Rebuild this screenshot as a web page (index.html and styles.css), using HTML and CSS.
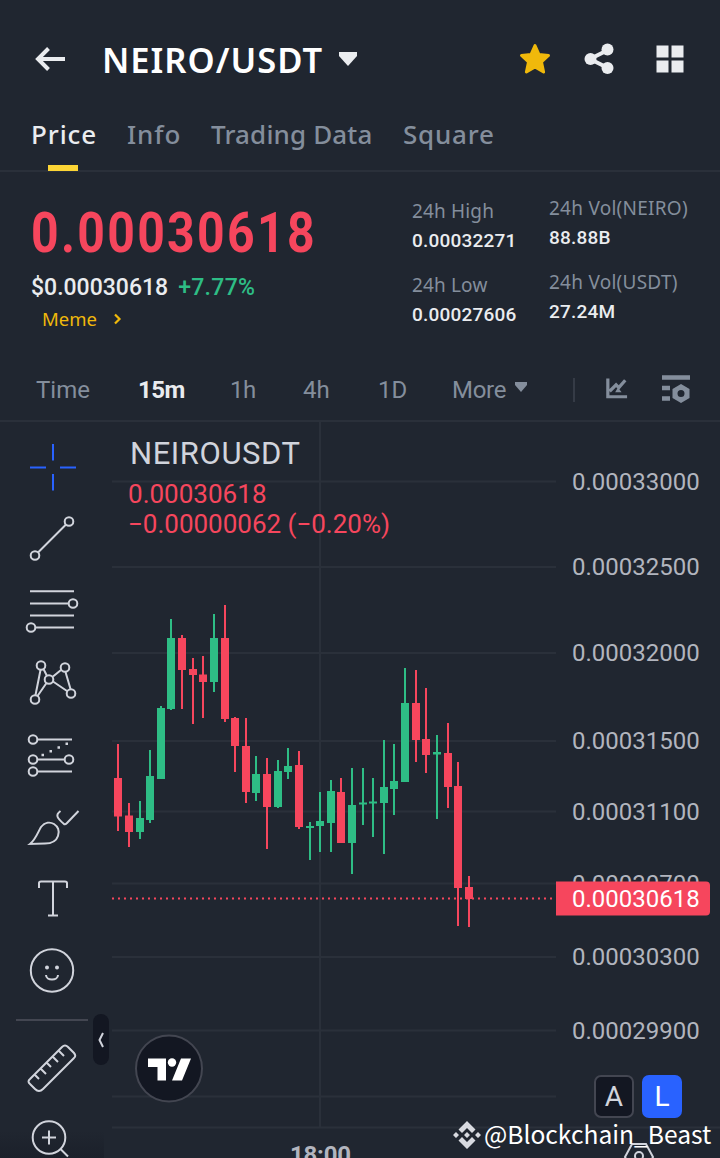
FILE: index.html
```html
<!DOCTYPE html>
<html lang="en">
<head>
<meta charset="utf-8">
<title>NEIRO/USDT</title>
<link rel="stylesheet" href="styles.css">
</head>
<body>
<div class="app">
  <header class="header">
    <svg class="back" viewBox="0 0 32 28"><path d="M31 14H4M14.500 3.500L4 14L14.500 24.500" fill="none" stroke="#eaecef" stroke-width="4"/></svg>
    <h1 class="title">NEIRO/USDT</h1>
    <svg class="caret" viewBox="0 0 20 16"><path d="M1 1H19V5L10 15L1 5Z" fill="#eaecef"/></svg>
    <div class="actions">
      <svg class="star" viewBox="0 0 32 32"><path d="M16 2.5L20 11.5L29.5 12.5L22.5 19L24.6 29L16 24L7.4 29L9.5 19L2.5 12.5L12 11.5Z" fill="#f0b90b" stroke="#f0b90b" stroke-width="3" stroke-linejoin="round"/></svg>
      <svg class="share" viewBox="0 0 30 32"><path d="M24 7L6 16L24 25" fill="none" stroke="#eaecef" stroke-width="4"/><g fill="#eaecef"><circle cx="23.5" cy="6.5" r="6"/><circle cx="6.5" cy="16" r="6"/><circle cx="23.5" cy="25" r="6"/></g></svg>
      <svg class="tiles" viewBox="0 0 28 28"><path d="M0.5 0.5H12.5V12.5H.5ZM15.5 .5H27.5V12.5H15.5ZM.5 15.5H12.5V27.5H.5ZM15.5 15.5H27.5V27.5H15.5Z" fill="#eaecef"/></svg>
    </div>
  </header>
  <nav class="tabs">
    <span class="tab tab-active">Price</span>
    <span class="tab tab-info">Info</span>
    <span class="tab tab-data">Trading Data</span>
    <span class="tab tab-square">Square</span>
  </nav>
  <section class="summary">
    <div class="quote">
      <div class="last">0.00030618</div>
      <div class="fiat"><span class="fiat-value">$0.00030618</span><span class="change">+7.77%</span></div>
      <div class="tag">Meme<svg class="chevron" viewBox="0 0 9 12"><path d="M2 1.5L6.5 6L2 10.5" fill="none" stroke="#f0b90b" stroke-width="2.2"/></svg></div>
    </div>
    <div class="stats">
      <div class="stat"><span class="label">24h High</span><span class="value">0.00032271</span></div>
      <div class="stat"><span class="label">24h Low</span><span class="value">0.00027606</span></div>
    </div>
    <div class="stats stats-volume">
      <div class="stat"><span class="label">24h Vol(NEIRO)</span><span class="value">88.88B</span></div>
      <div class="stat"><span class="label">24h Vol(USDT)</span><span class="value">27.24M</span></div>
    </div>
  </section>
  <nav class="intervals">
    <span class="interval time">Time</span>
    <span class="interval interval-active">15m</span>
    <span class="interval hour">1h</span>
    <span class="interval four">4h</span>
    <span class="interval day">1D</span>
    <span class="interval more">More</span>
    <svg class="more-caret" viewBox="0 0 14 11"><path d="M1 0H13V3L7 10L1 3Z" fill="#848e9c"/></svg>
    <span class="separator"></span>
    <svg class="depth" viewBox="0 0 24 24"><path d="M2 1V21H23M4 15L11 8L14 11L21 3" fill="none" stroke="#848e9c" stroke-width="3.5"/><path d="M13 11L17 16H10Z" fill="#848e9c"/></svg>
    <svg class="settings" viewBox="0 0 28 30"><path d="M0 3.5H28M0 14H8M0 24.5H8" stroke="#848e9c" stroke-width="4.5"/><path fill-rule="evenodd" d="M19 10L27.5 15V24L19 29L10.5 24V15ZM19 16A3.5 3.5 0 1 0 19 23A3.5 3.5 0 1 0 19 16Z" fill="#848e9c"/></svg>
  </nav>
  <main class="workspace">
    <aside class="tools">
      <svg class="tool" viewBox="0 431 112 72"><path d="M53 444V460.500M53 474V490.500M30 467.500H46M60 467.500H76" stroke="#2962ff" stroke-width="2"/></svg>
      <svg class="tool" viewBox="0 503 112 72"><circle cx="69" cy="521.500" r="4.300"/><circle cx="35" cy="555.500" r="4.300"/><path d="M38 552.500L66 524.500"/></svg>
      <svg class="tool" viewBox="0 575 112 72"><path d="M30 591.300H74M30 603.500H68.500M30 615.500H74M35 627.500H74"/><circle cx="73" cy="603.500" r="4.300"/><circle cx="31" cy="627.500" r="4.300"/></svg>
      <svg class="tool" viewBox="0 647 112 72"><circle cx="41" cy="665.500" r="4.300"/><circle cx="65" cy="667.500" r="4.300"/><circle cx="49" cy="679.500" r="4.300"/><circle cx="35" cy="699.500" r="4.300"/><circle cx="71" cy="693.500" r="4.300"/><path d="M40.500 670L35.500 695M43.500 669L47 676M61 670L53 676.500M46.500 683L37.500 696M53 681.500L67 691M65.500 672L70.500 689"/></svg>
      <svg class="tool" viewBox="0 719 112 72"><circle cx="33" cy="739.500" r="4.300"/><circle cx="33" cy="759.500" r="4.300"/><circle cx="69" cy="759.500" r="4.300"/><circle cx="33" cy="771.500" r="4.300"/><path d="M37.500 739.500H72M37.500 759.500H64.500M37.500 771.500H72"/><path d="M41.500 755h2.500M49.500 751.300h2.500M57.500 747.500h2.500M65.500 743.700h2.500" stroke-width="2.500"/></svg>
      <svg class="tool" viewBox="0 791 112 72"><path d="M30 844C36 839 38 832 41 827C49 817 62 826 58 836C56 842 50 843.500 45 843.500ZM60.500 811C55 815 57 818 64 824Q65 825 67 823L78.500 811"/></svg>
      <svg class="tool" viewBox="0 863 112 72"><path d="M39 888V883Q39 881.500 41 881.500H65Q67 881.500 67 883V888M53 882V915.500M48 915.500H58"/></svg>
      <svg class="tool" viewBox="0 935 112 72"><circle cx="52" cy="970.500" r="21.200"/><path d="M46 975C46 981 58 981 58 975"/><circle class="dot" cx="47" cy="967.500" r="2"/><circle class="dot" cx="57" cy="967.500" r="2"/></svg>
      <div class="tool-divider"></div>
      <svg class="tool" viewBox="0 1032 112 72"><path d="M30 1079L62 1047Q65 1044 68 1047L74 1053Q76.500 1056 74 1058L43 1089Q39 1093 35 1089L30 1084Q27 1081.500 30 1079ZM35 1075L39 1079M41 1069L46 1074M47 1063L51 1067M53 1057L58 1062M59 1051L64 1056"/></svg>
      <svg class="tool tool-zoom" viewBox="0 1104 112 54"><circle cx="49" cy="1137.500" r="16.300"/><path d="M42 1137.500H56M49 1130.500V1144.500M60.500 1149L68 1156.500"/></svg>
    </aside>
    <svg class="chart" viewBox="112 420 608 738">
      <path class="grid" d="M112 481.500H556M112 567H556M112 653H556M112 741H556M112 811.500H556M112 883.500H556M112 957H556M112 1030.500H556M112 1096.500H556M112 1127.500H720M320 420V1127"/>
      <path class="wick up" d="M140 801V839M150 750V823M161 706V779M171 619V710M214 614V692M256 756V801M278 760V808M288 748V779M310 822V860M320 792V852M331 780V852M352 768V874M363 768V825M373 778V837M384 740V854M394 744V815M405 668V782M437 735V819"/>
      <path class="body up" d="M140 818V832M150 776V820M161 708V779M171 638V709M214 638V682M256 774V793M278 771V807M288 766V772M310 826V828M320 821V826M331 791V823M352 805V843M363 802.500V804.500M373 801.500V803.500M384 787V803M394 781V789M405 703V782M437 752V754.500"/>
      <path class="wick down" d="M118 744V831M129 803V847M182 635V709M193 658V724M203 656V718M225 605V722M235 717V772M246 718V803M267 758V849M299 751V829M341 778V843M416 670V762M426 688V773M448 723V808M458 762V926M469 876V927"/>
      <path class="body down" d="M118 778V816.500M129 815.500V832M182 638V670M193 669V675M203 674.500V682M225 638V719M235 718V746M246 746V792M267 774V807M299 765V827M341 792V843M416 703V740M426 739V755M448 753V787M458 786V888M469 887V899"/>
      <path class="price-line" d="M112 898.500H555"/>
      <text class="symbol" x="130" y="463.500" textLength="170">NEIROUSDT</text>
      <g class="legend"><text x="128" y="503" textLength="138.500">0.00030618</text><text x="128" y="533" textLength="262">−0.00000062 (−0.20%)</text></g>
      <g class="axis">
        <text x="572" y="490">0.00033000</text><text x="572" y="575">0.00032500</text><text x="572" y="661">0.00032000</text><text x="572" y="749">0.00031500</text><text x="572" y="820">0.00031100</text><text x="572" y="892">0.00030700</text><text x="572" y="965">0.00030300</text><text x="572" y="1039">0.00029900</text>
      </g>
      <path d="M556 881.500H706Q710 881.500 710 885.500V911.500Q710 915.500 706 915.500H556Z" fill="#f6465d"/>
      <text class="current" x="572" y="907">0.00030618</text>
      <text class="clock" x="290" y="1163" textLength="61">18:00</text>
      <circle cx="169" cy="1068.500" r="33" fill="#131722" stroke="#434651" stroke-width="2"/>
      <path d="M148 1058.500H166V1080.500H157.500V1067H148ZM181 1058.500H191L182 1080.500H172Z" fill="#fff"/><circle cx="172" cy="1062.500" r="4.200" fill="#fff"/>
      <path class="gear" d="M632 1144H646L653 1157L646 1170H632L625 1157Z"/><circle class="gear" cx="639" cy="1156" r="4"/>
    </svg>
    <div class="collapse"><svg viewBox="0 0 6 16"><path d="M5 1L1.500 8L5 15" fill="none" stroke="#d1d4dc" stroke-width="2"/></svg></div>
    <div class="scales"><span class="scale">A</span><span class="scale scale-on">L</span></div>
    <div class="credit">
      <svg viewBox="0 0 28 28"><path d="M14 0L22.500 8.500L19 12L14 7L9 12L5.500 8.500ZM3 11L6 14L3 17L0 14ZM25 11L28 14L25 17L22 14ZM14 11L17 14L14 17L11 14ZM9 16L14 21L19 16L22.500 19.500L14 28L5.500 19.500Z" fill="#d8dae0"/></svg>
      <span class="handle">@Blockchain_Beast</span>
    </div>
  </main>
</div>
</body>
</html>
```

FILE: styles.css
```css
* { box-sizing: border-box; }
body { margin: 0; background: #202630; }
svg { display: block; flex: none; }
.app { width: 720px; height: 1158px; overflow: hidden; background: #202630; color: #eaecef; font-family: "Noto Sans", sans-serif; white-space: nowrap; }
.header { display: flex; align-items: center; height: 118px; padding: 0 0 1px 34px; }
.back { width: 32px; height: 28px; }
.title { width: 220px; margin: 3px 0 0 36px; font-size: 34.5px; line-height: 44px; font-weight: 600; color: #fff; letter-spacing: 1px; }
.caret { width: 20px; height: 16px; margin-left: 16px; }
.actions { display: flex; align-items: center; margin-left: 161px; }
.star { width: 32px; height: 32px; }
.share { width: 30px; height: 32px; margin-left: 33px; }
.tiles { width: 28px; height: 28px; margin-left: 42px; }

.tabs { display: flex; height: 54px; padding-left: 31px; border-bottom: 2px solid #2a303a; font-size: 26px; line-height: 32px; font-weight: 500; color: #848e9c; }
.tab { flex: none; }
.tab-active { display: flex; flex-direction: column; justify-content: space-between; width: 65px; color: #eaecef; letter-spacing: 0.9px; }
.tab-active::after { content: ""; width: 30px; height: 6px; margin: 0 0 -1px 17px; background: #fcd535; }
.tab-info { margin-left: 31px; width: 54px; letter-spacing: 0.9px; }
.tab-data { margin-left: 30px; width: 161px; letter-spacing: 0.15px; }
.tab-square { margin-left: 31px; letter-spacing: 0.8px; }

.summary { display: flex; height: 187px; }
.quote { width: 412px; padding: 31px 0 0 31px; }
.last { width: 330px; font: 700 56px/60px Roboto, sans-serif; color: #f6465d; letter-spacing: 2.7px; transform: scaleX(0.86); transform-origin: left; }
.fiat { display: flex; gap: 10px; margin-top: 11px; font: 500 23px/28px Roboto, sans-serif; }
.change { color: #2ebd85; letter-spacing: 0.3px; }
.tag { display: flex; align-items: center; gap: 16px; margin: 3px 0 0 11px; font-size: 18.5px; line-height: 28px; color: #f0b90b; }
.chevron { width: 9px; height: 12px; }
.stats { display: flex; flex-direction: column; gap: 18px; width: 137px; padding-top: 26px; }
.stats-volume { width: 171px; padding-top: 23px; }
.stat { display: flex; flex-direction: column; height: 56px; }
.label { font-size: 19px; line-height: 27px; color: #848e9c; letter-spacing: 0.15px; }
.stats-volume .label { letter-spacing: 0.25px; }
.value { font: 500 19px/31px Roboto, sans-serif; letter-spacing: 0.2px; }

.intervals { display: flex; align-items: center; height: 63px; padding-left: 36px; border-bottom: 2px solid #2a303a; font: 400 24px/30px Roboto, sans-serif; color: #848e9c; }
.interval { flex: none; }
.time { width: 102px; }
.interval-active { width: 92px; color: #eaecef; font-weight: 700; letter-spacing: -0.5px; }
.hour { width: 73px; letter-spacing: -0.4px; }
.four { width: 75px; }
.day { width: 74px; }
.more { width: 61px; letter-spacing: -0.3px; }
.more-caret { width: 14px; height: 11px; margin: -4px 0 0 1px; }
.separator { width: 2px; height: 24px; margin: 0 31px 0 45px; background: #353b46; }
.depth { width: 22px; height: 23px; margin-bottom: 2px; }
.settings { width: 28px; height: 30px; margin: 0 0 2px 34px; }

.workspace { position: relative; display: flex; height: 738px; margin-top: -2px; }
.tools { display: flex; flex-direction: column; width: 112px; padding-top: 11px; }
.tool { width: 112px; height: 72px; fill: none; stroke: #d1d4dc; stroke-width: 2; }
.dot { fill: #d1d4dc; stroke: none; }
.tool-divider { width: 72px; height: 2px; margin: 12px 0 11px 16px; background: #434651; }
.tool-zoom { height: 54px; background: linear-gradient(transparent 50%, #1b202a) 0 0 / 104px 54px no-repeat; }
.chart { width: 608px; height: 738px; font-family: Roboto, sans-serif; }
.grid { fill: none; stroke: #2a303a; stroke-width: 2; }
.wick { fill: none; stroke-width: 2; }
.body { fill: none; stroke-width: 8; }
.up { stroke: #2ebd85; }
.down { stroke: #f6465d; }
.price-line { stroke: #f6465d; stroke-width: 2; stroke-dasharray: 2 4; }
.symbol { font-size: 31px; fill: #d1d4dc; }
.legend { font-size: 26px; fill: #f6465d; }
.axis { font-size: 24px; fill: #b2b5be; }
.current { font-size: 24px; fill: #fff; }
.clock { font-size: 24px; font-weight: 700; fill: #b2b5be; }
.gear { fill: none; stroke: #d1d4dc; stroke-width: 2; }
.collapse { position: absolute; left: 93px; top: 594px; display: flex; align-items: center; justify-content: center; width: 16px; height: 51px; border-radius: 8px; background: #131722; }
.collapse svg { width: 6px; height: 16px; }
.scales { position: absolute; left: 594px; top: 655px; display: flex; gap: 8px; }
.scale { width: 40px; height: 43px; border: 2px solid #434651; border-radius: 7px; background: #131722; color: #d1d4dc; font: 400 28px/40px Roboto, sans-serif; text-align: center; }
.scale-on { border-color: #2962ff; background: #2962ff; color: #fff; }
.credit { position: absolute; left: 453px; top: 696px; display: flex; align-items: center; gap: 3px; font: 400 24.6px/34px "Noto Sans CJK SC", sans-serif; color: #fff; }
.credit svg { width: 28px; height: 28px; margin-top: 2px; }
.handle { margin-bottom: 1px; }
```
